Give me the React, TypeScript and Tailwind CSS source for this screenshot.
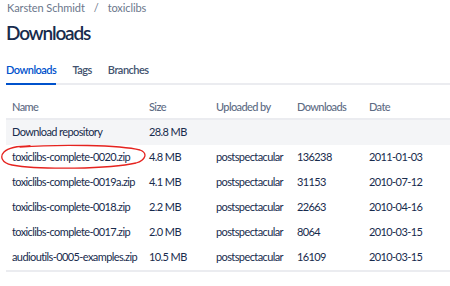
import React from 'react';

type Row = {
  name: string;
  size: string;
  by: string;
  downloads: string;
  date: string;
};

const rows: Row[] = [
  { name: 'toxiclibs-complete-0020.zip', size: '4.8 MB', by: 'postspectacular', downloads: '136238', date: '2011-01-03' },
  { name: 'toxiclibs-complete-0019a.zip', size: '4.1 MB', by: 'postspectacular', downloads: '31153', date: '2010-07-12' },
  { name: 'toxiclibs-complete-0018.zip', size: '2.2 MB', by: 'postspectacular', downloads: '22663', date: '2010-04-16' },
  { name: 'toxiclibs-complete-0017.zip', size: '2.0 MB', by: 'postspectacular', downloads: '8064', date: '2010-03-15' },
  { name: 'audioutils-0005-examples.zip', size: '10.5 MB', by: 'postspectacular', downloads: '16109', date: '2010-03-15' },
];

const cols = 'grid grid-cols-[137px_67px_81px_72px_1fr] items-center';

export default function App() {
  return (
    <div
      className="relative w-[450px] h-[286px] overflow-hidden bg-white pl-[6px] text-[#172b4d]"
      style={{ fontFamily: 'Lato, "Noto Sans", Arial, sans-serif' }}
    >
      {/* breadcrumb */}
      <div className="flex items-center h-[16px] text-[11px] text-[#6b778c] pl-[1px] tracking-[-0.1px]">
        <span>Karsten Schmidt</span>
        <span className="mx-[9px]">/</span>
        <span>toxiclibs</span>
      </div>

      <h1 className="mt-[5px] text-[19px] leading-[24px] font-semibold tracking-[-1.2px] text-[#172b4d]">Downloads</h1>

      {/* tabs */}
      <div className="mt-[17px] flex border-b-2 border-[#ebecf0] text-[11px] font-semibold tracking-[-0.5px] text-[#42526e]">
        <div className="pb-[4px] -mb-[2px] border-b-2 border-[#0052cc] text-[#0052cc]">Downloads</div>
        <div className="ml-[16px] pb-[4px]">Tags</div>
        <div className="ml-[16px] pb-[4px]">Branches</div>
      </div>

      {/* table */}
      <div className="mt-[13px] text-[11px] tracking-[-0.6px] w-[444px]">
        <div className={`${cols} h-[22px] border-b-2 border-[#ebecf0] text-[#5e6c84] font-medium`}>
          <div className="pl-[6px]">Name</div>
          <div className="pl-[6px]">Size</div>
          <div className="pl-[6px]">Uploaded by</div>
          <div className="pl-[6px]">Downloads</div>
          <div className="pl-[6px]">Date</div>
        </div>
        <div className={`${cols} h-[25px] bg-[#f4f5f7]`}>
          <div className="pl-[6px]">Download repository</div>
          <div className="pl-[6px]">28.8 MB</div>
          <div />
          <div />
          <div />
        </div>
        {rows.map((r) => (
          <div key={r.name} className={`${cols} h-[25px] whitespace-nowrap`}>
            <div className="pl-[6px]">{r.name}</div>
            <div className="pl-[6px]">{r.size}</div>
            <div className="pl-[6px]">{r.by}</div>
            <div className="pl-[6px]">{r.downloads}</div>
            <div className="pl-[6px]">{r.date}</div>
          </div>
        ))}
        <div className="border-b-2 border-[#ebecf0]" />
      </div>

      {/* hand drawn red circle */}
      <svg className="absolute left-0 top-[143px]" width="150" height="28" viewBox="0 0 150 28" fill="none">
        <path
          d="M20 4 C60 1 120 2 140 7 C148 10 146 17 136 20 C110 26 40 27 12 22 C1 20 0 13 4 9 C8 5 18 3 30 3"
          stroke="#e5231f"
          strokeWidth="1.3"
          strokeLinecap="round"
        />
      </svg>
    </div>
  );
}
